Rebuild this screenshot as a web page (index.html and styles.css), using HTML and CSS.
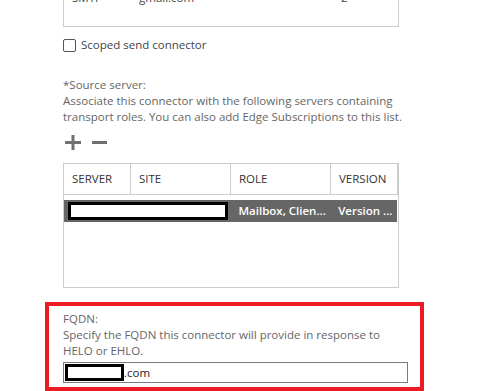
FILE: index.html
```html
<!DOCTYPE html>
<html>
<head>
<meta charset="utf-8">
<link rel="stylesheet" href="styles.css">
</head>
<body>
<div class="page">
  <div class="top-grid">
    <div class="top-row">
      <span class="c1">SMTP</span><span class="c2">gmail.com</span><span class="c3">2</span>
    </div>
  </div>

  <label class="scoped"><span class="check"></span><span>Scoped send connector</span></label>

  <div class="source">
    <div>*Source server:</div>
    <div>Associate this connector with the following servers containing transport roles. You can also add Edge Subscriptions to this list.</div>
  </div>

  <div class="toolbar">
    <svg class="icon" width="17" height="16" viewBox="0 0 17 16"><rect x="0" y="6" width="16" height="3" fill="#707070"/><rect x="6.5" y="0" width="3" height="15" fill="#707070"/></svg>
    <svg class="icon" width="16" height="16" viewBox="0 0 16 16"><rect x="0" y="6" width="15" height="3" fill="#707070"/></svg>
  </div>

  <div class="table">
    <div class="thead">
      <div class="th w1">SERVER</div>
      <div class="th w2">SITE</div>
      <div class="th w3">ROLE</div>
      <div class="th w4">VERSION</div>
    </div>
    <div class="row sel">
      <div class="td wide"><span class="redact r1"></span></div>
      <div class="td w3">Mailbox, Clien...</div>
      <div class="td w4">Version ...</div>
    </div>
  </div>

  <div class="fqdn">
    <div>FQDN:</div>
    <div>Specify the FQDN this connector will provide in response to HELO or EHLO.</div>
    <div class="input"><span class="redact r2"></span><span class="val">.com</span></div>
  </div>
</div>
</body>
</html>
```
FILE: styles.css
```css
html, body {
  margin: 0;
  padding: 0;
  background: #fff;
  overflow: hidden;
}
body {
  font-family: "Open Sans", "Noto Sans", sans-serif;
  font-size: 11.5px;
  line-height: 16px;
  color: #666;
}
.page {
  padding-left: 63px;
  width: 336px;
}
.top-grid {
  margin-top: -18px;
  border: 1px solid #ccc;
  padding-top: 7px;
  box-sizing: border-box;
  height: 45px;
}
.top-row {
  display: flex;
  color: #444;
}
.top-row .c1 { width: 67px; padding-left: 8px; box-sizing: border-box; }
.top-row .c2 { width: 200px; padding-left: 8px; box-sizing: border-box; }
.top-row .c3 { padding-left: 10px; }
.scoped {
  display: flex;
  align-items: center;
  gap: 5px;
  margin-top: 10px;
  color: #444;
  height: 16px;
}
.check {
  width: 13px;
  height: 13px;
  box-sizing: border-box;
  border: 1px solid #555;
  border-radius: 2px;
  background: #fff;
}
.source {
  margin-top: 24px;
  width: 345px;
}
.toolbar {
  margin-top: 10px;
  height: 16px;
  display: flex;
  gap: 10px;
  padding-left: 2px;
}
.icon { display: block; }
.table {
  margin-top: 12px;
  border: 1px solid #ccc;
  height: 125px;
  box-sizing: border-box;
  width: 336px;
}
.thead {
  display: flex;
  height: 31px;
  border-bottom: 1px solid #ccc;
  box-sizing: border-box;
}
.th {
  border-right: 1px solid #ccc;
  box-sizing: border-box;
  padding-left: 8px;
  line-height: 30px;
  color: #333;
}
.w1 { width: 67px; }
.w2 { width: 100px; }
.w3 { width: 100px; }
.w4 { width: 67px; }
.row {
  display: flex;
  margin-top: 5px;
  height: 22px;
  width: 333px;
}
.sel {
  background: #666;
  color: #fff;
  font-weight: 600;
}
.td {
  box-sizing: border-box;
  padding-left: 8px;
  line-height: 22px;
  white-space: nowrap;
  overflow: hidden;
}
.wide {
  width: 167px;
  padding-left: 4px;
  display: flex;
  align-items: center;
}
.redact {
  display: block;
  background: #fff;
  border: 3px solid #000;
  box-sizing: border-box;
}
.r1 { width: 160px; height: 18px; }
.r2 { width: 59px; height: 17px; }
.fqdn {
  margin-left: -18px;
  width: 379px;
  box-sizing: border-box;
  border: 4px solid #ed1c24;
  padding: 5px 14px 4px 14px;
  margin-top: 14px;
}
.input {
  margin-top: 3px;
  width: 345px;
  height: 21px;
  box-sizing: border-box;
  border: 1px solid #7a7a7a;
  display: flex;
  align-items: center;
  padding-left: 1px;
}
.val {
  color: #222;
  line-height: 16px;
}
```
